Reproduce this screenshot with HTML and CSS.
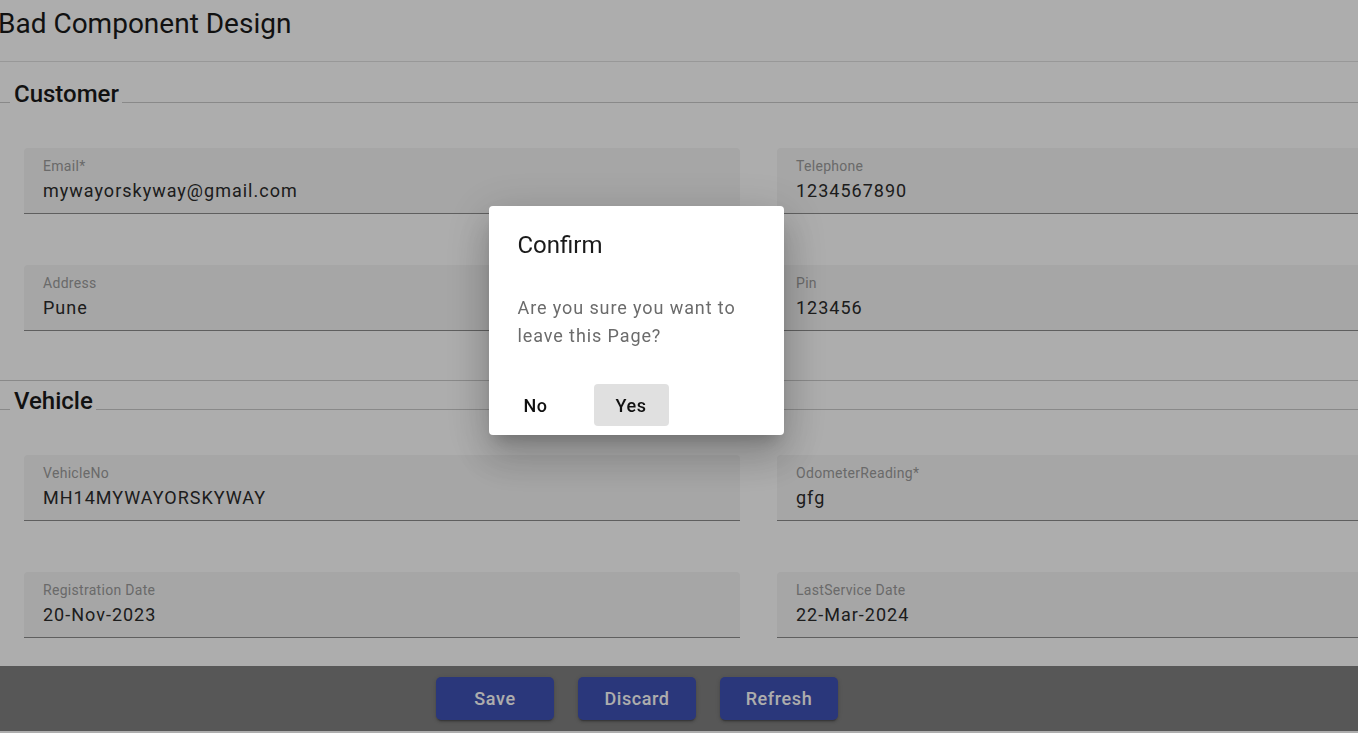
FILE: index.html
```html
<html lang="en">
  <head>
    <meta charset="UTF-8" />
    <meta name="viewport" content="width=device-width, initial-scale=1.0" />
    <title>Bad Component Design</title>
    <link rel="stylesheet" href="styles.css">
  </head>
  <body>
    <div class="page">
      <h1>Bad Component Design</h1>
      <hr />

      <div class="section">
        <div class="section_head"><span>Customer</span></div>
        <div class="fields">
          <div class="field">
            <label>Email*</label>
            <div class="value">mywayorskyway@gmail.com</div>
          </div>
          <div class="field">
            <label>Telephone</label>
            <div class="value">1234567890</div>
          </div>
          <div class="field">
            <label>Address</label>
            <div class="value">Pune</div>
          </div>
          <div class="field">
            <label>Pin</label>
            <div class="value">123456</div>
          </div>
        </div>
      </div>

      <div class="section last">
        <div class="section_head"><span>Vehicle</span></div>
        <div class="fields">
          <div class="field">
            <label>VehicleNo</label>
            <div class="value">MH14MYWAYORSKYWAY</div>
          </div>
          <div class="field">
            <label>OdometerReading*</label>
            <div class="value">gfg</div>
          </div>
          <div class="field">
            <label>Registration Date</label>
            <div class="value">20-Nov-2023</div>
          </div>
          <div class="field">
            <label>LastService Date</label>
            <div class="value">22-Mar-2024</div>
          </div>
        </div>
      </div>

      <div class="btn_bar">
        <button>Save</button>
        <button>Discard</button>
        <button>Refresh</button>
      </div>
    </div>

    <div class="backdrop">
      <div class="dialog">
        <h2>Confirm</h2>
        <p>Are you sure you want to leave this Page?</p>
        <div class="dialog_actions">
          <button class="no">No</button>
          <button class="yes">Yes</button>
        </div>
      </div>
    </div>
  </body>
</html>
```

FILE: styles.css
```css
* {
  padding: 0;
  margin: 0;
  box-sizing: border-box;
}

html,
body {
  width: 100%;
  height: 100%;
  overflow: hidden;
}

body {
  background-color: #fff;
  font-family: Roboto, "Liberation Sans", Arial, sans-serif;
  color: #1a1a1a;
}

.page h1 {
  font-size: 28px;
  font-weight: 400;
  line-height: 33px;
  margin: 7px 0 0 -2px;
}

.page hr {
  border: none;
  border-top: 1px solid #e0e0e0;
  margin-top: 21px;
}

.section {
  padding-bottom: 49px;
  border-bottom: 1px solid #cbcbcb;
}
.section.last {
  border-bottom: none;
  padding-bottom: 0;
}
.section + .section {
  margin-top: 11px;
}
.page hr + .section .section_head {
  margin-top: 23px;
}

.section_head {
  display: flex;
  align-items: flex-end;
}
.section_head::before {
  content: "";
  width: 10px;
  border-bottom: 1px solid #cbcbcb;
}
.section_head::after {
  content: "";
  flex: 1;
  border-bottom: 1px solid #cbcbcb;
}
.section_head span {
  font-size: 24px;
  font-weight: 500;
  line-height: 18px;
  padding: 0 3px 0 4px;
}

.fields {
  display: grid;
  grid-template-columns: 716px 716px;
  column-gap: 37px;
  row-gap: 51px;
  padding: 45px 0 0 24px;
}

.field {
  height: 66px;
  padding: 10px 19px 0;
  background-color: #f5f5f5;
  border-radius: 4px 4px 0 0;
  border-bottom: 1px solid #8d8d8d;
}
.field label {
  display: block;
  font-size: 14px;
  line-height: 16px;
  letter-spacing: 0.3px;
  color: #9c9c9c;
}
.field .value {
  margin-top: 5px;
  font-size: 18px;
  line-height: 24px;
  letter-spacing: 1px;
  color: #2b2b2b;
}

.btn_bar {
  margin-top: 28px;
  height: 65px;
  background-color: #808080;
  display: flex;
  justify-content: center;
  align-items: center;
  gap: 24px;
  padding-right: 84px;
}
.btn_bar button {
  width: 118px;
  height: 43px;
  border: none;
  outline: none;
  border-radius: 5px;
  background-color: #3f51b5;
  color: #fff;
  font-family: Roboto, "Liberation Sans", Arial, sans-serif;
  font-size: 18px;
  font-weight: 500;
  letter-spacing: 0.6px;
  box-shadow: 0 3px 1px -2px rgba(0, 0, 0, 0.2), 0 2px 2px 0 rgba(0, 0, 0, 0.14),
    0 1px 5px 0 rgba(0, 0, 0, 0.12);
  cursor: pointer;
}

.backdrop {
  position: fixed;
  top: 0;
  left: 0;
  width: 100%;
  height: 100%;
  background-color: rgba(0, 0, 0, 0.32);
  display: flex;
  justify-content: center;
  align-items: center;
  padding: 0 86px 92px 0;
}

.dialog {
  width: 295px;
  height: 229px;
  background-color: #fff;
  border-radius: 4px;
  padding: 23px 0 0 29px;
  box-shadow: 0 11px 15px -7px rgba(0, 0, 0, 0.2),
    0 24px 38px 3px rgba(0, 0, 0, 0.14), 0 9px 46px 8px rgba(0, 0, 0, 0.12);
}
.dialog h2 {
  font-size: 24px;
  font-weight: 400;
  line-height: 32px;
  color: #1a1a1a;
}
.dialog p {
  margin-top: 33px;
  font-size: 18px;
  line-height: 28px;
  letter-spacing: 0.9px;
  color: #6b6b6b;
  width: 250px;
}
.dialog_actions {
  display: flex;
  gap: 26px;
  margin: 34px 0 0 -14px;
}
.dialog_actions button {
  height: 42px;
  border: none;
  outline: none;
  border-radius: 4px;
  background-color: transparent;
  font-family: Roboto, "Liberation Sans", Arial, sans-serif;
  font-size: 18px;
  font-weight: 500;
  letter-spacing: 0.5px;
  color: #111;
  cursor: pointer;
}
.dialog_actions .no {
  width: 64px;
}
.dialog_actions .yes {
  width: 75px;
  background-color: #e0e0e0;
}
```
